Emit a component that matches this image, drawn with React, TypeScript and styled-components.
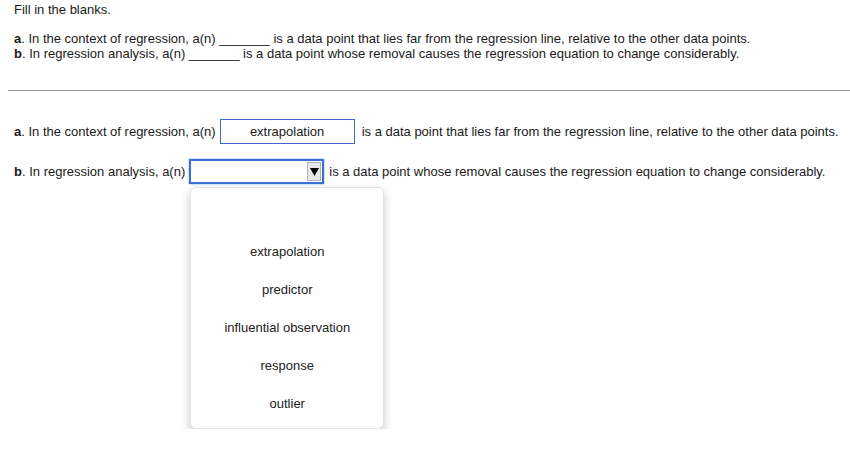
import React from "react";
import styled, { createGlobalStyle } from "styled-components";

// STYLED COMPONENTS --------------------------->

const GlobalStyle = createGlobalStyle`
  body {
    margin: 0;
    background: #fff;
    font-family: "Liberation Sans", Arial, sans-serif;
    font-size: 13px;
    color: #1a1a1a;
  }
`;

const Page = styled.div`
  padding: 2px 0 0 8px;
`;

const Inner = styled.div`
  padding-left: 6px;
`;

const Title = styled.div`
  line-height: 15px;
  margin-bottom: 14px;
`;

const Line = styled.div`
  line-height: 15px;
  white-space: nowrap;
`;

const Label = styled.span`
  font-weight: bold;
`;

const Rule = styled.hr`
  border: 0;
  height: 1px;
  background: #8f949b;
  margin: 29px 0 28px;
`;

const Row = styled.div<{ $gap?: number }>`
  display: flex;
  align-items: flex-start;
  white-space: nowrap;
  margin-bottom: ${(p) => p.$gap ?? 0}px;
`;

const RowText = styled.span`
  line-height: 25px;
`;

const AnswerBox = styled.div`
  box-sizing: border-box;
  width: 135px;
  height: 25px;
  margin: 0 7px 0 4px;
  border: 1px solid #3d6cc4;
  display: flex;
  align-items: center;
  justify-content: center;
`;

const SelectWrap = styled.div`
  width: 135px;
  flex-shrink: 0;
  display: flex;
  flex-direction: column;
  gap: 3px;
  margin: 0 5px 0 4px;
`;

const SelectBox = styled.div`
  box-sizing: border-box;
  width: 135px;
  height: 25px;
  border: 2px solid #3b6fd4;
  box-shadow: 0 0 2px #86a8ea;
  display: flex;
  align-items: center;
  justify-content: flex-end;
  padding-right: 1px;
`;

const ArrowButton = styled.div`
  box-sizing: border-box;
  width: 14px;
  height: 19px;
  background: #e8e8e8;
  border: 1px solid #b4b4b4;
  display: flex;
  align-items: center;
  justify-content: center;
`;

const Menu = styled.ul`
  box-sizing: border-box;
  width: 194px;
  flex-shrink: 0;
  margin: 0 0 0 1px;
  padding: 6px 0;
  list-style: none;
  background: #fff;
  border: 1px solid #e4e4e4;
  border-radius: 6px;
  box-shadow: 0 4px 10px rgba(0, 0, 0, 0.22);
`;

const MenuItem = styled.li`
  height: 38px;
  display: flex;
  align-items: center;
  justify-content: center;
  color: #222;
`;

// FUNCTIONAL COMPONENT --------------------------->

const choices = [
  "",
  "extrapolation",
  "predictor",
  "influential observation",
  "response",
  "outlier",
];

const App = () => {
  return (
    <Page>
      <GlobalStyle />
      <Inner>
        <Title>Fill in the blanks.</Title>
        <Line>
          <Label>a</Label>. In the context of regression, a(n) _______ is a
          data point that lies far from the regression line, relative to the
          other data points.
        </Line>
        <Line>
          <Label>b</Label>. In regression analysis, a(n) _______ is a data
          point whose removal causes the regression equation to change
          considerably.
        </Line>
      </Inner>
      <Rule />
      <Inner>
        <Row $gap={15}>
          <RowText>
            <Label>a</Label>. In the context of regression, a(n)
          </RowText>
          <AnswerBox>extrapolation</AnswerBox>
          <RowText>
            is a data point that lies far from the regression line, relative
            to the other data points.
          </RowText>
        </Row>
        <Row>
          <RowText>
            <Label>b</Label>. In regression analysis, a(n)
          </RowText>
          <SelectWrap>
            <SelectBox>
              <ArrowButton>
                <svg width="9" height="9" viewBox="0 0 9 9">
                  <path d="M0 1 L9 1 L4.5 9 Z" fill="#000" />
                </svg>
              </ArrowButton>
            </SelectBox>
            <Menu>
              {choices.map((c, i) => (
                <MenuItem key={i}>{c}</MenuItem>
              ))}
            </Menu>
          </SelectWrap>
          <RowText>
            is a data point whose removal causes the regression equation to
            change considerably.
          </RowText>
        </Row>
      </Inner>
    </Page>
  );
};

export default App;
